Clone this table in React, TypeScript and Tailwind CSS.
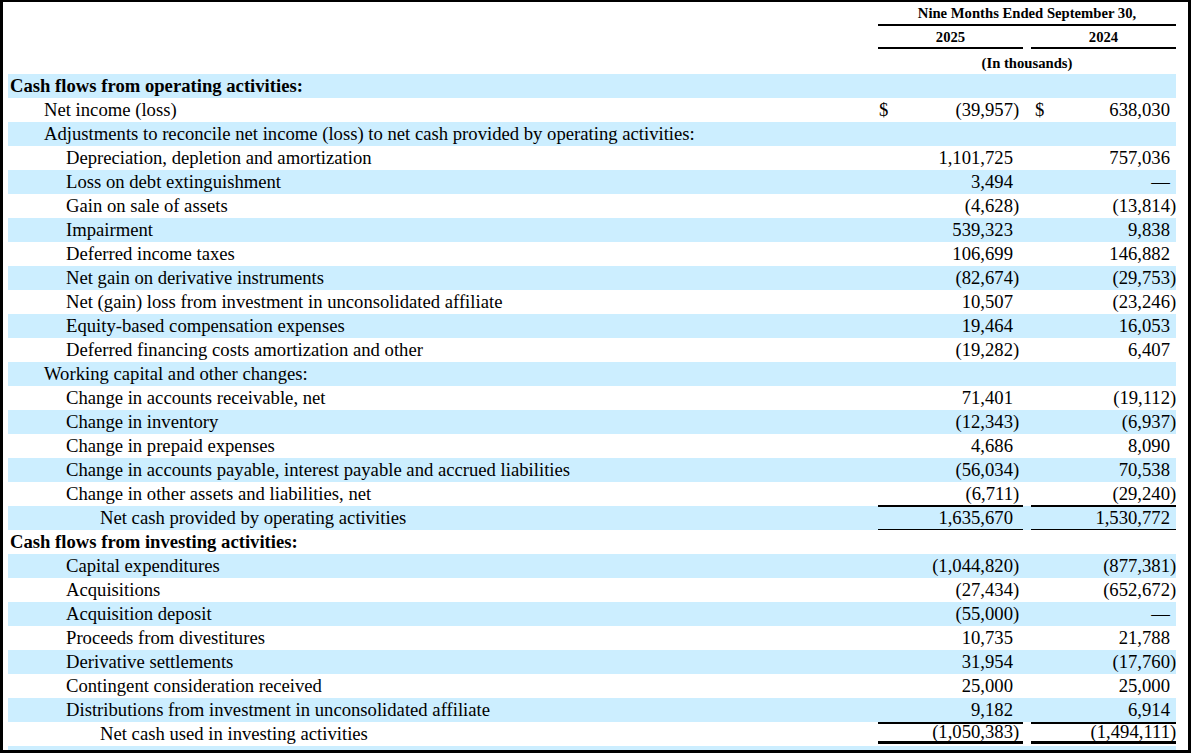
import React from "react";

type Row = {
  label: string;
  level: 0 | 1 | 2 | 3;
  bold?: boolean;
  a?: string;
  b?: string;
  dollar?: boolean;
  total?: "op" | "inv";
};

const rows: Row[] = [
  { label: "Cash flows from operating activities:", level: 0, bold: true },
  { label: "Net income (loss)", level: 1, a: "(39,957)", b: "638,030", dollar: true },
  { label: "Adjustments to reconcile net income (loss) to net cash provided by operating activities:", level: 1 },
  { label: "Depreciation, depletion and amortization", level: 2, a: "1,101,725", b: "757,036" },
  { label: "Loss on debt extinguishment", level: 2, a: "3,494", b: "—" },
  { label: "Gain on sale of assets", level: 2, a: "(4,628)", b: "(13,814)" },
  { label: "Impairment", level: 2, a: "539,323", b: "9,838" },
  { label: "Deferred income taxes", level: 2, a: "106,699", b: "146,882" },
  { label: "Net gain on derivative instruments", level: 2, a: "(82,674)", b: "(29,753)" },
  { label: "Net (gain) loss from investment in unconsolidated affiliate", level: 2, a: "10,507", b: "(23,246)" },
  { label: "Equity-based compensation expenses", level: 2, a: "19,464", b: "16,053" },
  { label: "Deferred financing costs amortization and other", level: 2, a: "(19,282)", b: "6,407" },
  { label: "Working capital and other changes:", level: 1 },
  { label: "Change in accounts receivable, net", level: 2, a: "71,401", b: "(19,112)" },
  { label: "Change in inventory", level: 2, a: "(12,343)", b: "(6,937)" },
  { label: "Change in prepaid expenses", level: 2, a: "4,686", b: "8,090" },
  { label: "Change in accounts payable, interest payable and accrued liabilities", level: 2, a: "(56,034)", b: "70,538" },
  { label: "Change in other assets and liabilities, net", level: 2, a: "(6,711)", b: "(29,240)" },
  { label: "Net cash provided by operating activities", level: 3, a: "1,635,670", b: "1,530,772", total: "op" },
  { label: "Cash flows from investing activities:", level: 0, bold: true },
  { label: "Capital expenditures", level: 2, a: "(1,044,820)", b: "(877,381)" },
  { label: "Acquisitions", level: 2, a: "(27,434)", b: "(652,672)" },
  { label: "Acquisition deposit", level: 2, a: "(55,000)", b: "—" },
  { label: "Proceeds from divestitures", level: 2, a: "10,735", b: "21,788" },
  { label: "Derivative settlements", level: 2, a: "31,954", b: "(17,760)" },
  { label: "Contingent consideration received", level: 2, a: "25,000", b: "25,000" },
  { label: "Distributions from investment in unconsolidated affiliate", level: 2, a: "9,182", b: "6,914" },
  { label: "Net cash used in investing activities", level: 3, a: "(1,050,383)", b: "(1,494,111)", total: "inv" },
  { label: "", level: 0 },
];

const indent: Record<number, string> = {
  0: "pl-[2px]",
  1: "pl-[36px]",
  2: "pl-[58px]",
  3: "pl-[92px]",
};

function Num({ v }: { v?: string }) {
  if (!v) return null;
  const neg = v.startsWith("(");
  const body = neg ? v.slice(0, -1) : v;
  return (
    <span className="flex items-center">
      <span>{body}</span>
      <span className="inline-block w-[6px]">{neg ? ")" : ""}</span>
    </span>
  );
}

function ValueCell({
  v,
  dollar,
  total,
  second,
}: {
  v?: string;
  dollar?: boolean;
  total?: "op" | "inv";
  second?: boolean;
}) {
  const box =
    total === "op"
      ? "h-[26px] border-t-2 border-b-2 border-black"
      : total === "inv"
      ? "h-[22px] self-start border-t-2 border-b-[3px] border-black pb-[2px] leading-[16px]"
      : "h-[24px]";
  return (
    <div
      className={`flex w-[145px] items-center justify-between ${
        second ? "pl-[4px] pr-0" : "pl-[1px] pr-[4px]"
      } ${box}`}
    >
      <span>{dollar ? "$" : ""}</span>
      <Num v={v} />
    </div>
  );
}

export default function App() {
  return (
    <div
      className="box-border h-[753px] w-[1191px] overflow-hidden border-b-[3px] border-l-[3px] border-r-[3px] border-t-2 border-black bg-white pl-[5px] pr-[12px] text-black"
      style={{ fontFamily: '"Liberation Serif", "Times New Roman", serif' }}
    >
      {/* Header */}
      <div className="flex">
        <div className="w-[870px]" />
        <div className="w-[298px] text-[14.67px] font-bold leading-none">
          <div className="flex h-[24px] items-center justify-center border-b-2 border-black">
            Nine Months Ended September 30,
          </div>
          <div className="flex gap-[8px] pt-[1px]">
            <div className="flex h-[22px] w-[145px] items-center justify-center border-b-2 border-black">
              2025
            </div>
            <div className="flex h-[22px] w-[145px] items-center justify-center border-b-2 border-black">
              2024
            </div>
          </div>
          <div className="flex h-[25px] items-center justify-center pt-[3px]">
            (In thousands)
          </div>
        </div>
      </div>

      {/* Body */}
      <div className="flex flex-col text-[18.67px] leading-[24px]">
        {rows.map((r, i) => (
          <div
            key={i}
            className={`flex h-[24px] items-center ${
              i % 2 === 0 ? "bg-[#cceeff]" : "bg-white"
            }`}
          >
            <div
              className={`w-[870px] whitespace-nowrap ${indent[r.level]} ${
                r.bold ? "font-bold" : ""
              }`}
            >
              {r.label}
            </div>
            {r.a !== undefined || r.b !== undefined ? (
              <div
                className={`flex gap-[8px] ${
                  r.total === "inv" ? "h-[24px] self-start" : ""
                }`}
              >
                <ValueCell v={r.a} dollar={r.dollar} total={r.total} />
                <ValueCell v={r.b} dollar={r.dollar} total={r.total} second />
              </div>
            ) : null}
          </div>
        ))}
      </div>
    </div>
  );
}
